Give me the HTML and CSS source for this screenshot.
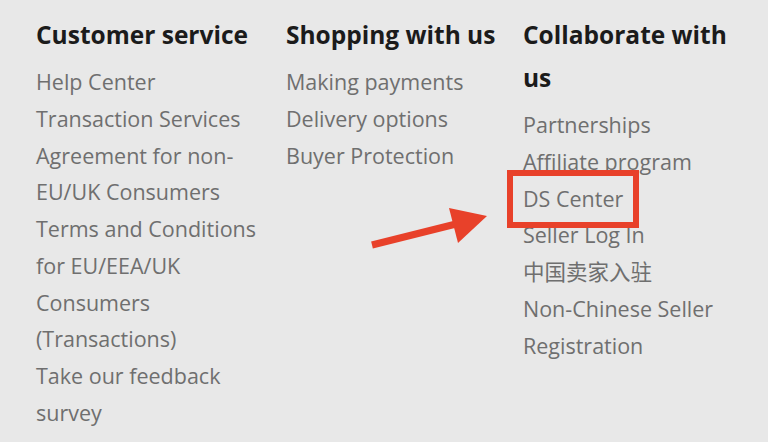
FILE: index.html
```html
<!DOCTYPE html>
<html lang="en">
<head>
<meta charset="utf-8">
<title>Footer links</title>
<link rel="stylesheet" href="styles.css">
</head>
<body>
<div class="footer">
  <section class="col">
    <h3 class="title">Customer service</h3>
    <ul class="links">
      <li><a href="#">Help Center</a></li>
      <li><a href="#">Transaction Services</a></li>
      <li><a href="#">Agreement for non-EU/UK Consumers</a></li>
      <li><a href="#">Terms and Conditions for EU/EEA/UK Consumers (Transactions)</a></li>
      <li><a href="#">Take our feedback survey</a></li>
    </ul>
  </section>
  <section class="col">
    <h3 class="title">Shopping with us</h3>
    <ul class="links">
      <li><a href="#">Making payments</a></li>
      <li><a href="#">Delivery options</a></li>
      <li><a href="#">Buyer Protection</a></li>
    </ul>
  </section>
  <section class="col">
    <h3 class="title">Collaborate with us</h3>
    <ul class="links">
      <li><a href="#">Partnerships</a></li>
      <li><a href="#">Affiliate program</a></li>
      <li><a href="#" class="highlight">DS Center</a></li>
      <li><a href="#">Seller Log In</a></li>
      <li><a href="#">中国卖家入驻</a></li>
      <li><a href="#">Non-Chinese Seller Registration</a></li>
    </ul>
  </section>
</div>
<svg class="arrow" width="768" height="442" viewBox="0 0 768 442" aria-hidden="true">
  <line x1="372" y1="245" x2="460" y2="223" stroke="#e8412a" stroke-width="7"/>
  <polygon points="449,208 487,216 458,243" fill="#e8412a"/>
</svg>
</body>
</html>
```

FILE: styles.css
```css
html, body {
  margin: 0;
  padding: 0;
  background: #e8e8e8;
}
body {
  width: 768px;
  height: 442px;
  overflow: hidden;
  position: relative;
  font-family: "Open Sans", "Noto Sans CJK SC", sans-serif;
}
.footer {
  display: grid;
  grid-template-columns: 226px 213px 220px;
  column-gap: 24px;
  padding: 13px 0 0 36px;
}
.title {
  margin: 0 0 8px;
  font-size: 24.5px;
  line-height: 43px;
  font-weight: 700;
  color: #1b1b1b;
}
.links {
  list-style: none;
  margin: 0;
  padding: 0;
}
.links li {
  font-size: 21.5px;
  line-height: 36.75px;
}
.links a {
  color: #6f6f6f;
  text-decoration: none;
}
.highlight {
  position: relative;
}
.highlight::after {
  content: "";
  position: absolute;
  left: -16px;
  right: -16px;
  top: -14px;
  bottom: -15px;
  border: 6px solid #e8412a;
}
.arrow {
  position: absolute;
  left: 0;
  top: 0;
  pointer-events: none;
}
```
